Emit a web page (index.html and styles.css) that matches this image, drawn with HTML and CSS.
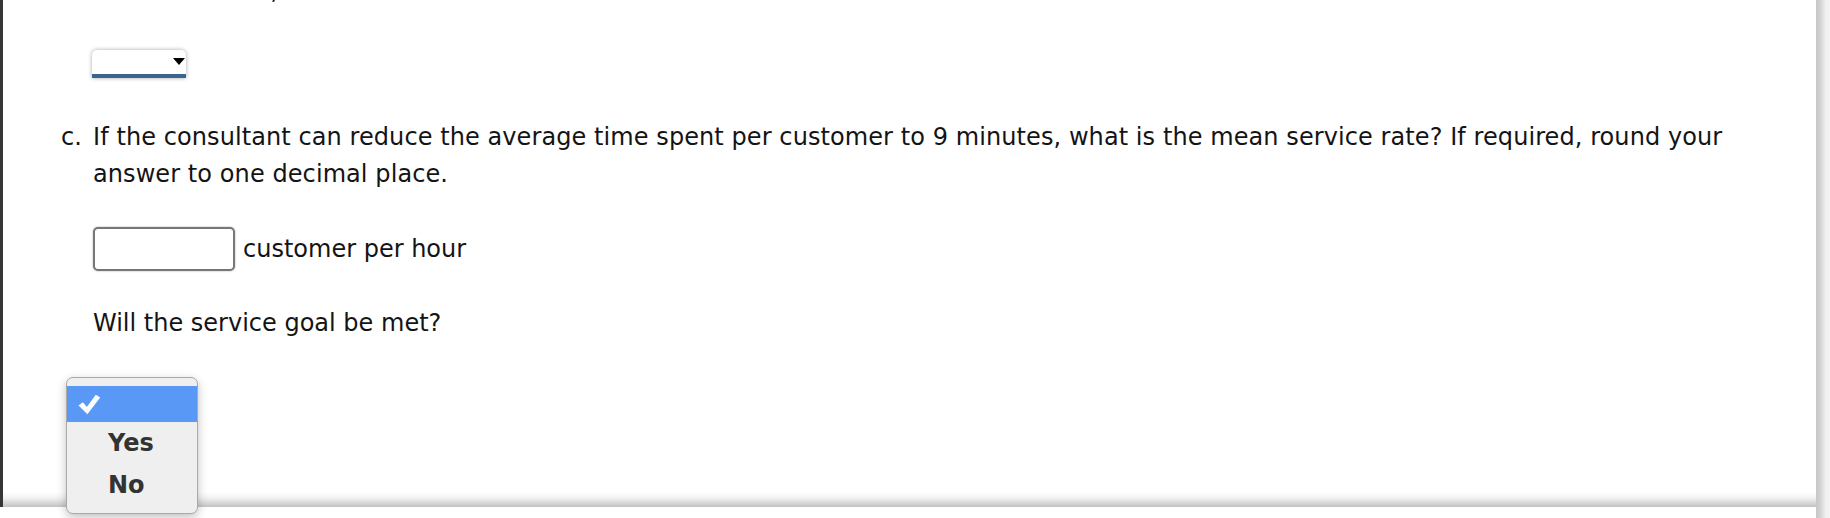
FILE: index.html
```html
<!DOCTYPE html>
<html lang="en">
<head>
<meta charset="utf-8">
<title>Question c</title>
<link rel="stylesheet" href="styles.css">
</head>
<body>
<div class="frame">
  <div class="main">
    <div class="panel">
      <p class="cut-line">In these cases, the result is</p>
      <div class="select">
        <span class="select-arrow"></span>
      </div>
      <ol class="parts">
        <li class="part">
          <span class="part-label">c.</span>
          <div class="part-body">
            <p class="question">If the consultant can reduce the average time spent per customer to 9 minutes, what is the mean service rate? If required, round your answer to one decimal place.</p>
            <div class="answer-row">
              <input class="answer-box" type="text" aria-label="mean service rate">
              <span class="unit">customer per hour</span>
            </div>
            <p class="prompt">Will the service goal be met?</p>
          </div>
        </li>
      </ol>
    </div>
    <div class="footer"></div>
  </div>
  <div class="scrollbar"></div>
</div>

<div class="menu" role="listbox">
  <div class="menu-item is-selected">
    <svg class="check" viewBox="0 0 24 22" width="23" height="21" aria-hidden="true">
      <path d="M0.5 12 L5.2 8.6 L9.2 13.6 L18.6 0.8 L23.2 3.6 L9.8 21.2 Z" fill="#fff"/>
    </svg>
  </div>
  <div class="menu-item">Yes</div>
  <div class="menu-item">No</div>
</div>
</body>
</html>
```
FILE: styles.css
```css
html, body {
  margin: 0;
  padding: 0;
  background: #ffffff;
}

body {
  width: 1830px;
  height: 518px;
  overflow: hidden;
  font-family: "DejaVu Sans", Verdana, sans-serif;
  color: #141414;
}

.frame {
  display: flex;
  height: 518px;
}

.main {
  flex: 1;
  display: flex;
  flex-direction: column;
}

.panel {
  height: 507px;
  border-left: 3px solid #363636;
  box-sizing: border-box;
  overflow: hidden;
  background: linear-gradient(to bottom, #ffffff 0, #ffffff calc(100% - 15px), #f2f2f2 calc(100% - 9px), #c2c2c2 100%);
}

.footer {
  flex: 1;
  background: #ffffff;
}

.scrollbar {
  width: 14px;
  background: linear-gradient(to right, #c6c6c6 0, #d2d2d2 4px, #e6e6e6 8px, #f1f1f1 10px, #f3f3f3 100%);
}

.cut-line {
  margin: -27px 0 0 90px;
  font-size: 24px;
  line-height: 37px;
  letter-spacing: 0.4px;
  white-space: nowrap;
}

.select {
  position: relative;
  width: 94px;
  height: 28px;
  margin: 40px 0 0 89px;
  box-sizing: border-box;
  background: #fff;
  border-radius: 5px 5px 0 0;
  border-bottom: 4px solid #3a6590;
  box-shadow: 0 0 4px rgba(0, 0, 0, 0.35);
}

.select-arrow {
  position: absolute;
  right: 1px;
  top: 8px;
  width: 0;
  height: 0;
  border-left: 6px solid transparent;
  border-right: 6px solid transparent;
  border-top: 7px solid #000;
}

.parts {
  list-style: none;
  margin: 41px 0 0 0;
  padding: 0;
}

.part {
  display: flex;
  font-size: 24px;
  line-height: 37px;
}

.part-label {
  width: 32px;
  padding-left: 58px;
}

.part-body {
  flex: 1;
  padding-right: 60px;
}

.question {
  margin: 0;
  letter-spacing: 0.08px;
}

.answer-row {
  display: flex;
  align-items: center;
  gap: 8px;
  margin-top: 34px;
}

.answer-box {
  width: 142px;
  height: 44px;
  box-sizing: border-box;
  margin: 0;
  border: 2px solid #777;
  border-radius: 5px;
  box-shadow: 0 0 2px rgba(0, 0, 0, 0.35);
  background: #fff;
  font: inherit;
}

.prompt {
  margin: 34px 0 0 0;
}

.menu {
  position: absolute;
  left: 66px;
  top: 377px;
  width: 132px;
  height: 137px;
  box-sizing: border-box;
  padding-top: 8px;
  background: #efefef;
  border: 1px solid #a9a9a9;
  border-radius: 7px;
  box-shadow: 0 3px 10px rgba(0, 0, 0, 0.25);
  overflow: hidden;
  font-family: "DejaVu Sans", Verdana, sans-serif;
  font-weight: bold;
  font-size: 24px;
  color: #333;
}

.menu-item {
  height: 42px;
  line-height: 42px;
  padding-left: 41px;
}

.menu-item.is-selected {
  height: 36px;
  padding-left: 11px;
  background: #5999f5;
  display: flex;
  align-items: center;
}

.check {
  display: block;
}
```
